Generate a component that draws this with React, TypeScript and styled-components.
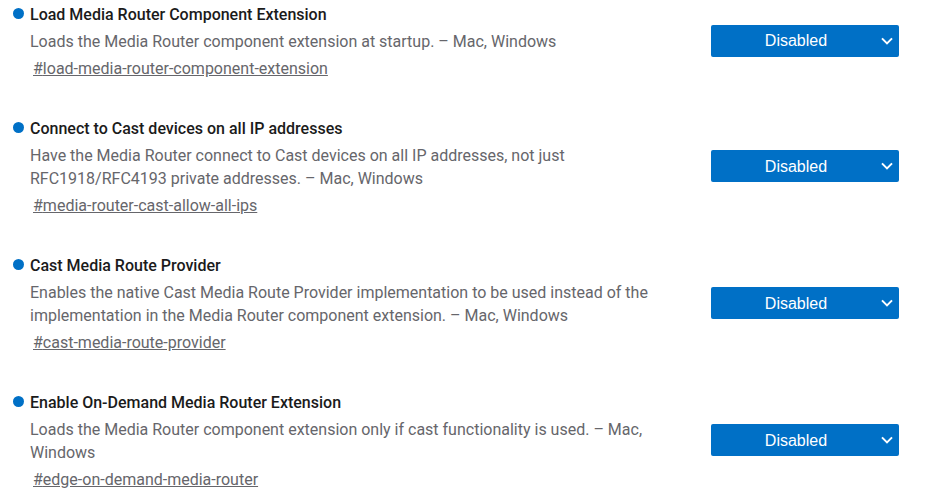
import React from "react";
import styled, { createGlobalStyle } from "styled-components";

const GlobalStyle = createGlobalStyle`
  * { box-sizing: border-box; }
  body { margin: 0; background: #fff; }
`;

const List = styled.main`
  padding: 3px 37px 0 13px;
  font-family: Roboto, sans-serif;
  font-size: 16px;
  line-height: 23px;
  color: #66666b;
`;

const Experiment = styled.section`
  display: grid;
  grid-template-columns: minmax(0, 1fr) 188px;
  column-gap: 48px;
  align-items: center;

  & + & {
    margin-top: 37px;
  }
`;

const Details = styled.div`
  padding-left: 17px;
`;

const Title = styled.h3`
  display: flex;
  align-items: center;
  gap: 6px;
  margin: 0 0 4px -17px;
  font-size: 16px;
  font-weight: 500;
  color: #1b1b1b;
`;

const Dot = styled.span`
  width: 11px;
  height: 11px;
  margin-bottom: 2px;
  border-radius: 50%;
  background: #0070c6;
`;

const Description = styled.p`
  margin: 0 0 4px;
`;

const Permalink = styled.a`
  display: inline-block;
  margin-left: 3px;
  color: inherit;
  text-decoration: underline;
`;

const SelectBox = styled.div`
  display: grid;
  align-items: center;
  padding-bottom: 2px;
`;

const Select = styled.select`
  grid-area: 1 / 1;
  width: 100%;
  height: 32px;
  padding: 0 18px 0 0;
  border: 0;
  border-radius: 2px;
  appearance: none;
  background: #0070c6;
  color: #fff;
  font: 16px "Liberation Sans", Arial, sans-serif;
  text-align: center;
  text-align-last: center;
`;

const Chevron = styled.svg`
  grid-area: 1 / 1;
  justify-self: end;
  margin-right: 6px;
  pointer-events: none;
`;

const experiments = [
  {
    id: "load-media-router-component-extension",
    title: "Load Media Router Component Extension",
    text: "Loads the Media Router component extension at startup. – Mac, Windows",
  },
  {
    id: "media-router-cast-allow-all-ips",
    title: "Connect to Cast devices on all IP addresses",
    text: "Have the Media Router connect to Cast devices on all IP addresses, not just RFC1918/RFC4193 private addresses. – Mac, Windows",
  },
  {
    id: "cast-media-route-provider",
    title: "Cast Media Route Provider",
    text: "Enables the native Cast Media Route Provider implementation to be used instead of the implementation in the Media Router component extension. – Mac, Windows",
  },
  {
    id: "edge-on-demand-media-router",
    title: "Enable On-Demand Media Router Extension",
    text: "Loads the Media Router component extension only if cast functionality is used. – Mac, Windows",
  },
];

export default function App() {
  return (
    <>
      <GlobalStyle />
      <List>
        {experiments.map(({ id, title, text }) => (
          <Experiment key={id} id={id}>
            <Details>
              <Title id={`${id}-title`}><Dot />{title}</Title>
              <Description>{text}</Description>
              <Permalink href={`#${id}`}>#{id}</Permalink>
            </Details>
            <SelectBox>
              <Select aria-labelledby={`${id}-title`} defaultValue="Disabled">
                <option>Default</option>
                <option>Enabled</option>
                <option>Disabled</option>
              </Select>
              <Chevron width="12" height="8" viewBox="0 0 12 8" fill="none" aria-hidden="true">
                <path d="M1 1.4 6 6.4 11 1.4" stroke="#fff" strokeWidth="2" />
              </Chevron>
            </SelectBox>
          </Experiment>
        ))}
      </List>
    </>
  );
}
